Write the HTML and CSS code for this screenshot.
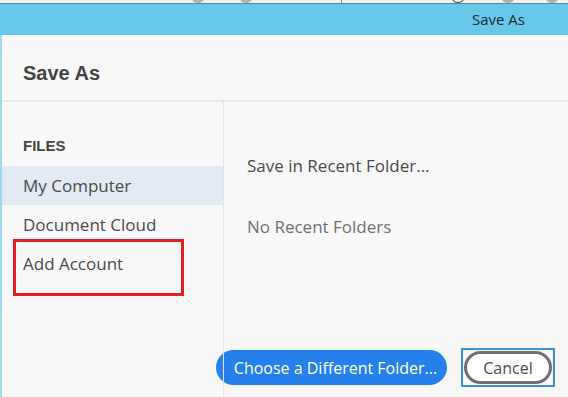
FILE: index.html
```html
<!DOCTYPE html>
<html lang="en">
<head>
  <meta charset="UTF-8" />
  <title>Save As</title>
  <link rel="stylesheet" href="styles.css">
</head>
<body>
  <div class="topstrip">
    <span class="dot" style="left: 192px"></span>
    <span class="dot" style="left: 240px"></span>
    <span class="tick" style="left: 341px"></span>
    <span class="ring" style="left: 452px"></span>
    <span class="dot" style="left: 502px"></span>
    <span class="dot" style="left: 546px"></span>
  </div>
  <div class="titlebar">Save As</div>

  <div class="dialog">
    <div class="dialog-header">Save As</div>
    <div class="dialog-body">
      <div class="sidebar">
        <div class="section-label">FILES</div>
        <div class="nav-item active">My Computer</div>
        <div class="nav-item">Document Cloud</div>
        <div class="nav-item">Add Account</div>
        <div class="highlight-box"></div>
      </div>
      <div class="main">
        <div class="main-title">Save in Recent Folder...</div>
        <div class="empty">No Recent Folders</div>
        <div class="actions">
          <button class="btn-primary">Choose a Different Folder...</button>
          <div class="focus-ring">
            <button class="btn-cancel">Cancel</button>
          </div>
        </div>
      </div>
    </div>
  </div>
</body>
</html>
```

FILE: styles.css
```css
:root {
  --title-blue: #66c9ea;
  --panel: #f8f8f8;
  --text: #4b4b4b;
  --muted: #707070;
  --line: #e4e4e4;
  --select: #e1eaf5;
  --primary: #2680eb;
}

* {
  box-sizing: border-box;
}

body {
  margin: 0;
  width: 568px;
  height: 397px;
  overflow: hidden;
  font-family: 'Open Sans', 'Noto Sans', sans-serif;
  color: var(--text);
  background: var(--panel);
}

.topstrip {
  position: relative;
  height: 4px;
  background: #f2f2f2;
  border-bottom: 1px solid #6f8088;
}

.topstrip .dot,
.topstrip .ring,
.topstrip .tick {
  position: absolute;
  top: -6px;
  width: 12px;
  height: 9px;
  border-radius: 50%;
  background: #b0b0b0;
}

.topstrip .ring {
  background: none;
  border: 1px solid #555;
}

.topstrip .tick {
  width: 1px;
  border-radius: 0;
  background: #888;
}

.titlebar {
  height: 31px;
  background: var(--title-blue);
  color: #1d2a30;
  font-size: 15px;
  text-align: right;
  padding-right: 43px;
  line-height: 30px;
}

.dialog {
  height: 362px;
  border-left: 2px solid #9fd9ef;
  display: flex;
  flex-direction: column;
}

.dialog-header {
  height: 67px;
  flex-shrink: 0;
  padding-left: 21px;
  border-bottom: 2px solid #e8e8e8;
  font-family: 'Liberation Sans', Arial, sans-serif;
  font-weight: bold;
  font-size: 20px;
  line-height: 76px;
  color: #444;
}

.dialog-body {
  flex: 1;
  display: flex;
}

.sidebar {
  position: relative;
  width: 222px;
  flex-shrink: 0;
  border-right: 1px solid var(--line);
  padding-top: 35px;
}

.section-label {
  padding-left: 21px;
  font-family: 'Liberation Sans', Arial, sans-serif;
  font-weight: bold;
  font-size: 15px;
  color: #444;
  height: 29px;
}

.nav-item {
  height: 39px;
  line-height: 39px;
  padding-left: 21px;
  font-size: 17px;
  color: var(--text);
}

.nav-item.active {
  background: var(--select);
}

.highlight-box {
  position: absolute;
  left: 11px;
  top: 137px;
  width: 171px;
  height: 57px;
  border: 3px solid #e31e24;
}

.main {
  flex: 1;
  display: flex;
  flex-direction: column;
  padding: 52px 13px 10px 23px;
}

.main-title {
  font-size: 17px;
  line-height: 24px;
}

.empty {
  margin-top: 37px;
  font-size: 17px;
  line-height: 24px;
  color: var(--muted);
}

.actions {
  margin-top: auto;
  margin-left: -31px;
  display: flex;
  align-items: center;
  gap: 14px;
}

.btn-primary {
  height: 35px;
  width: 231px;
  border: none;
  border-radius: 18px;
  background: var(--primary);
  color: white;
  font-family: inherit;
  font-size: 16px;
  padding: 0 0 0 8px;
}

.focus-ring {
  border: 2px solid #3d8ee0;
  padding: 1px;
}

.btn-cancel {
  display: block;
  height: 33px;
  width: 88px;
  border: 3px solid #707070;
  border-radius: 17px;
  background: white;
  color: var(--text);
  font-family: inherit;
  font-size: 16px;
  padding: 0;
}
```
